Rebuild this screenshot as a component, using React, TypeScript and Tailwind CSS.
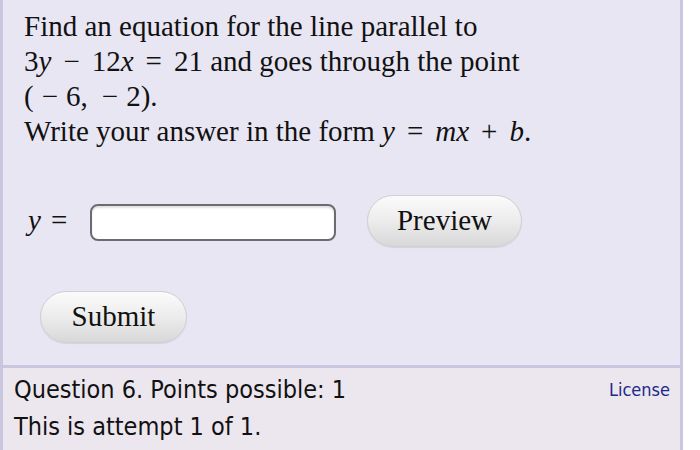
import React from 'react';

const serif = { fontFamily: '"Liberation Serif", "DejaVu Serif", serif' };

function V({ children }: { children: React.ReactNode }) {
  return <i className="italic">{children}</i>;
}

function Op({ children }: { children: React.ReactNode }) {
  return <span className="mx-[12px]">{children}</span>;
}

function PillButton({ label, className }: { label: string; className: string }) {
  return (
    <button
      className={`rounded-full border border-[#cfcfd4] bg-gradient-to-b from-[#fbfbfb] via-[#ececec] to-[#d8d8da] text-[29px] text-[#111] shadow-[0_1px_1px_rgba(0,0,0,0.08)] ${className}`}
      style={serif}
    >
      {label}
    </button>
  );
}

export default function App() {
  return (
    <div className="w-[700px] h-[450px] bg-white overflow-hidden flex">
      <div className="w-[683px] h-full flex flex-col border-l-[3px] border-r-[3px] border-[#c9c6e0]">
        {/* question body */}
        <div className="h-[365px] bg-[#e8e6f2] pl-[21px] pt-[9px]" style={serif}>
          <div className="text-[29px] leading-[35px] text-[#111]">
            <div>Find an equation for the line parallel to</div>
            <div>
              3<V>y</V>
              <Op>−</Op>12<V>x</V>
              <Op>=</Op>21 and goes through the point
            </div>
            <div>
              (<span className="ml-[8px] mr-[8px]">−</span>6,<span className="ml-[14px] mr-[8px]">−</span>2).
            </div>
            <div>
              Write your answer in the form <V>y</V>
              <Op>=</Op>
              <V>mx</V>
              <Op>+</Op>
              <V>b</V>.
            </div>
          </div>

          <div className="flex items-center mt-[46px] h-[52px]">
            <div className="text-[29px] text-[#111] w-[66px] pl-[4px]">
              <V>y</V>
              <span className="ml-[10px]">=</span>
            </div>
            <input
              className="mt-[2px] w-[246px] h-[37px] rounded-[8px] border-2 border-[#6c6c70] bg-white shadow-[inset_0_2px_2px_rgba(0,0,0,0.12)]"
              readOnly
            />
            <PillButton label="Preview" className="ml-[31px] w-[155px] h-[52px]" />
          </div>

          <div className="mt-[44px] ml-[16px]">
            <PillButton label="Submit" className="w-[147px] h-[52px]" />
          </div>
        </div>

        {/* footer */}
        <div
          className="flex-1 bg-[#ece6ee] border-t-[3px] border-[#c9c6e0] pl-[11px] pr-[10px] pt-[3px] flex justify-between"
          style={{ fontFamily: '"DejaVu Sans Condensed", "DejaVu Sans", sans-serif' }}
        >
          <div className="text-[25px] leading-[37px] text-[#111]">
            <div>Question 6. Points possible: 1</div>
            <div>This is attempt 1 of 1.</div>
          </div>
          <div className="text-[18px] leading-[37px] text-[#1d2a8a]">License</div>
        </div>
      </div>
    </div>
  );
}
